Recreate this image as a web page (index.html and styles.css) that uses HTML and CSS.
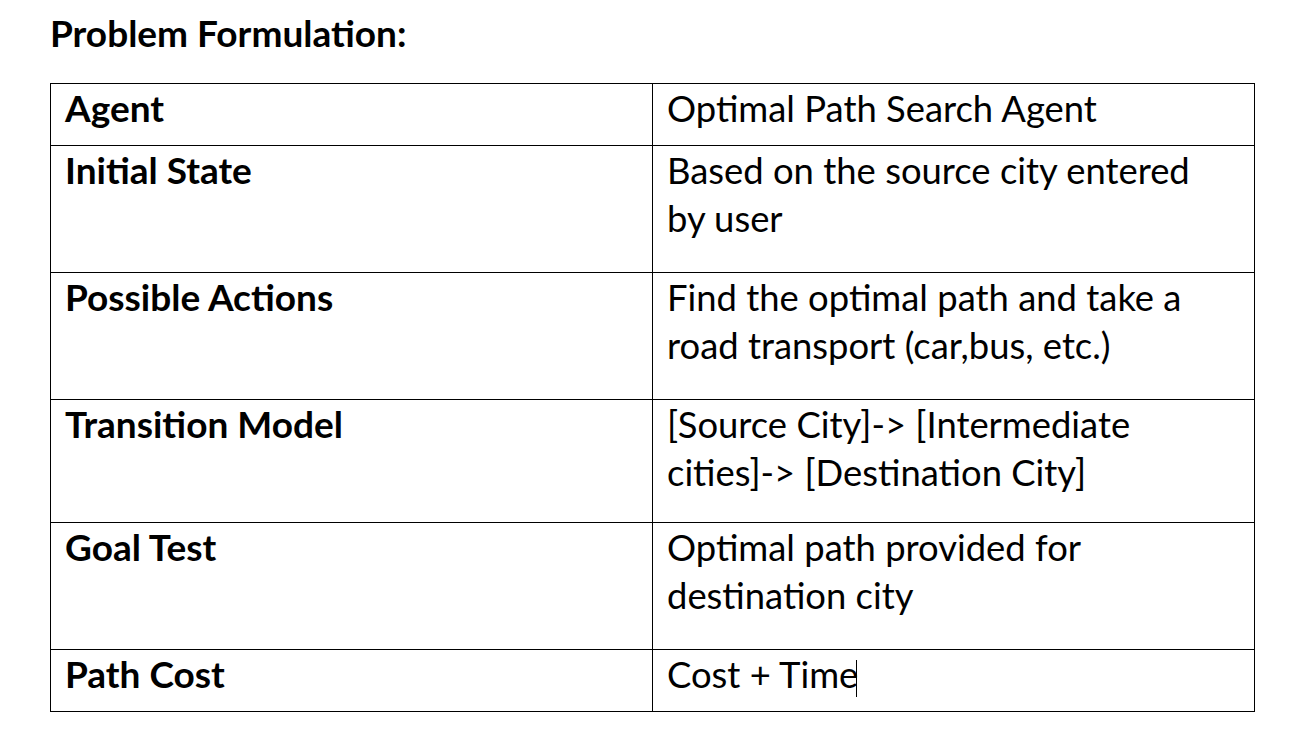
FILE: index.html
```html
<!DOCTYPE html>
<html>
<head>
<meta charset="utf-8">
<link rel="stylesheet" href="styles.css">
</head>
<body>
<div class="page">
  <h1 class="title">Problem Formulation:</h1>
  <table class="pf">
    <tr class="r-short">
      <th>Agent</th>
      <td>Optimal Path Search Agent</td>
    </tr>
    <tr class="r-tall">
      <th>Initial State</th>
      <td>Based on the source city entered<br>by user</td>
    </tr>
    <tr class="r-tall">
      <th>Possible Actions</th>
      <td>Find the optimal path and take a<br>road transport (car,bus, etc.)</td>
    </tr>
    <tr class="r-mid">
      <th>Transition Model</th>
      <td>[Source City]-&gt; [Intermediate<br>cities]-&gt; [Destination City]</td>
    </tr>
    <tr class="r-tall">
      <th>Goal Test</th>
      <td>Optimal path provided for<br>destination city</td>
    </tr>
    <tr class="r-short">
      <th>Path Cost</th>
      <td>Cost + Time<span class="caret"></span></td>
    </tr>
  </table>
</div>
</body>
</html>
```

FILE: styles.css
```css
html, body {
  margin: 0;
  padding: 0;
  background: #ffffff;
}
.page {
  padding: 13px 0 0 50px;
  font-family: Lato, "Open Sans", sans-serif;
  color: #000;
}
.title {
  margin: 0;
  font-size: 37px;
  font-weight: 700;
  line-height: 40px;
  height: 70px;
}
.pf {
  border-collapse: collapse;
  width: 1205px;
  table-layout: fixed;
  font-size: 36.4px;
  line-height: 48px;
}
.pf th, .pf td {
  border: 1.5px solid #000;
  width: 50%;
  text-align: left;
  vertical-align: top;
  padding: 0 14px 0 14px;
}
.pf th {
  font-weight: 700;
  font-size: 37px;
}
.pf td { font-weight: 400; }
.r-short { height: 62px; }
.r-tall { height: 127px; }
.r-mid { height: 123px; }
.caret {
  display: inline-block;
  width: 0;
  height: 37px;
  margin-left: -2px;
  border-left: 1px solid #000;
  vertical-align: -9px;
}
```
